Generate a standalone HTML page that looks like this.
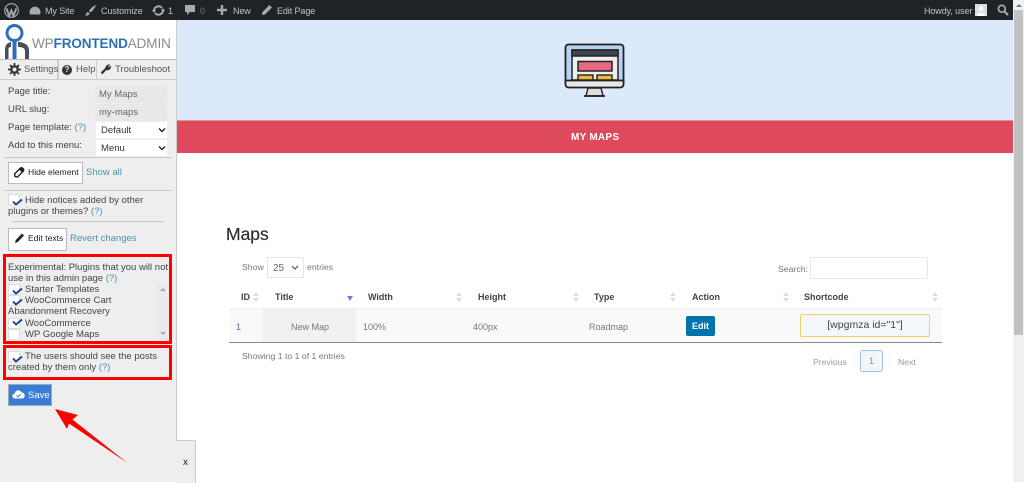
<!DOCTYPE html>
<html><head><meta charset="utf-8"><style>
html,body{margin:0;padding:0;width:1024px;height:482px;overflow:hidden;background:#fff;font-family:"Liberation Sans",sans-serif}
.a{position:absolute;white-space:nowrap}
.bar{color:#c3c4c7;font-size:9px;top:5px;line-height:12px;letter-spacing:-.1px}
.s{font-size:9.5px;color:#444;line-height:12px}
.b{font-size:8.6px;color:#222;line-height:12px}
.l{color:#4f8fb3}
.inp{background:#e8e8e8;color:#666;font-size:9.5px;border-radius:2px;left:95px;width:72px;height:17px;line-height:17px;text-indent:4px}
.sel{background:#fff;color:#333;font-size:9.5px;left:96px;width:71px;height:16px;line-height:18px;text-indent:5px}
.cb{width:10px;height:9px;background:#fff;border:1px solid #ddd}
.th{font-size:9px;font-weight:bold;color:#444;top:291px;line-height:12px}
.td{font-size:9px;color:#777;top:321px;line-height:12px}
.m{font-size:8.7px;color:#777;line-height:12px}
</style></head><body>
<div class="a" style="left:0;top:0;width:1024px;height:20px;background:#1d2327"></div>
<svg class="a" style="left:4px;top:3px" width="15" height="15" viewBox="0 0 15 15"><circle cx="7.5" cy="7.5" r="6.8" fill="none" stroke="#a7aaad" stroke-width="1.1"/><path d="M2.5 5.5L5.3 12.8 7.3 7.5 9.4 12.8 12.3 5.5" fill="none" stroke="#a7aaad" stroke-width="1.9"/></svg>
<svg class="a" style="left:29px;top:5px" width="12" height="10" viewBox="0 0 12 10"><path d="M1 9.5A5.5 5.5 0 1 1 11 9.5Z" fill="#a7aaad"/></svg>
<div class="a bar" style="left:45px">My Site</div>
<svg class="a" style="left:84px;top:4px" width="13" height="13" viewBox="0 0 13 13"><path d="M12 1C9 2 6 5 5 7L6.5 8.5C8.5 7 11 4 12 1ZM4 8C2.5 8 2.5 10 1 11.500C3 12 5.500 11 5.500 9.500Z" fill="#a7aaad"/></svg>
<div class="a bar" style="left:101px">Customize</div>
<svg class="a" style="left:152px;top:5px" width="13" height="11" viewBox="0 0 13 11"><path d="M2 5.500A4.500 4.500 0 0 1 10 3M11 5.500A4.500 4.500 0 0 1 3 8" fill="none" stroke="#a7aaad" stroke-width="2"/><path d="M0 5H4L2 8ZM9 6H13L11 3Z" fill="#a7aaad"/></svg>
<div class="a bar" style="left:168px">1</div>
<svg class="a" style="left:184px;top:4px" width="12" height="12" viewBox="0 0 12 12"><path d="M1 1H11V8H6L3 11V8H1Z" fill="#a7aaad"/></svg>
<div class="a bar" style="left:200px;color:#777">0</div>
<svg class="a" style="left:217px;top:5px" width="10" height="10" viewBox="0 0 10 10"><path d="M5 0V10M0 5H10" stroke="#a7aaad" stroke-width="2.400"/></svg>
<div class="a bar" style="left:233px">New</div>
<svg class="a" style="left:261px;top:4px" width="12" height="12" viewBox="0 0 12 12"><path d="M8.500 1L11 3.500 4 10.500 1 11 1.500 8Z" fill="#a7aaad"/></svg>
<div class="a bar" style="left:277px">Edit Page</div>
<div class="a bar" style="left:924px">Howdy, user</div>
<div class="a" style="left:975px;top:4px;width:12px;height:12px;background:#ddd"></div>
<svg class="a" style="left:975px;top:4px" width="12" height="12" viewBox="0 0 12 12"><circle cx="6" cy="4.500" r="2.300" fill="#fff"/><path d="M2 12C2 8 10 8 10 12Z" fill="#fff"/></svg>
<svg class="a" style="left:997px;top:4px" width="12" height="12" viewBox="0 0 12 12"><circle cx="4.800" cy="4.800" r="3.400" fill="none" stroke="#a7aaad" stroke-width="1.700"/><path d="M7.500 7.500L11 11" stroke="#a7aaad" stroke-width="2.200"/></svg>

<div class="a" style="left:1013px;top:0;width:11px;height:482px;background:#f1f1f1"></div>
<div class="a" style="left:1014px;top:10px;width:9px;height:325px;background:#c1c1c1"></div>
<div class="a" style="left:1016px;top:4px;width:0;height:0;border:3px solid transparent;border-bottom:3px solid #777;border-top:0"></div>

<div class="a" style="left:177px;top:20px;width:836px;height:100px;background:#dce9fb"></div>
<div class="a" style="left:177px;top:120px;width:836px;height:33px;background:#de4a5b"></div>
<div class="a" style="left:177px;top:120px;width:836px;height:1px;background:#e8909a"></div>
<div class="a" style="left:571px;top:131px;font-size:10px;font-weight:bold;color:#fff;letter-spacing:.25px;line-height:13px">MY MAPS</div>
<svg class="a" style="left:560px;top:40px" width="70" height="60" viewBox="0 0 70 60">
<rect x="5.500" y="4.500" width="58" height="42" rx="3" fill="#b8d4f5" stroke="#222" stroke-width="1.800"/>
<rect x="12" y="10" width="46" height="30" fill="#eee" stroke="#222" stroke-width="1.500"/>
<rect x="12" y="10" width="46" height="6" fill="#3d4650" stroke="#222" stroke-width="1.500"/>
<rect x="18" y="21.500" width="34" height="9.500" fill="#e86a82" stroke="#222" stroke-width="1.500"/>
<rect x="18" y="35" width="15" height="5" fill="#e8b93c" stroke="#222" stroke-width="1.400"/>
<rect x="37" y="35" width="15" height="5" fill="#e8b93c" stroke="#222" stroke-width="1.400"/>
<path d="M5.500 40.500H63.500V44A3 3 0 0 1 60.500 47.500H8.500A3 3 0 0 1 5.500 44Z" fill="#e6e6e6" stroke="#222" stroke-width="1.800"/>
<path d="M28 48H41L43 56H26Z" fill="#ddd" stroke="#222" stroke-width="1.400"/>
<path d="M24 56H45" stroke="#222" stroke-width="1.800"/>
</svg>

<div class="a" style="left:226px;top:223px;font-size:17.500px;color:#2b2f33;line-height:22px;-webkit-text-stroke:.2px #2b2f33">Maps</div>
<div class="a m" style="left:242px;top:261px">Show</div>
<div class="a" style="left:267px;top:257px;width:35px;height:19px;border:1px solid #e4e4e4;border-radius:2px;font-size:10px;color:#666;line-height:21px;text-indent:5px">25</div>
<svg class="a" style="left:291px;top:265px" width="8" height="5" viewBox="0 0 8 5"><path d="M1 1L4 4 7 1" fill="none" stroke="#555" stroke-width="1.200"/></svg>
<div class="a m" style="left:307px;top:261px">entries</div>
<div class="a m" style="left:778px;top:263px">Search:</div>
<div class="a" style="left:810px;top:257px;width:116px;height:20px;border:1px solid #e6e6e6;border-radius:2px"></div>

<div class="a th" style="left:241px">ID</div><div class="a th" style="left:275px">Title</div><div class="a th" style="left:368px">Width</div><div class="a th" style="left:478px">Height</div><div class="a th" style="left:594px">Type</div><div class="a th" style="left:692px">Action</div><div class="a th" style="left:804px">Shortcode</div>
<svg class="a" style="left:220px;top:290px" width="730" height="16" viewBox="0 0 730 16" fill="#ddd"><path d="M36 2L39 6H33ZM36 12L39 8H33ZM239 2L242 6H236ZM239 12L242 8H236ZM356 2L359 6H353ZM356 12L359 8H353ZM453 2L456 6H450ZM453 12L456 8H450ZM566 2L569 6H563ZM566 12L569 8H563ZM715 2L718 6H712ZM715 12L718 8H712Z"/><path d="M127 6H133L130 11Z" fill="#7a7ad8"/></svg>
<div class="a" style="left:229px;top:308px;width:713px;height:34px;background:#f9f9f9;border-top:1px solid #f0f0f0"></div>
<div class="a" style="left:263px;top:309px;width:93px;height:34px;background:#f1f1f1"></div>
<div class="a" style="left:229px;top:342px;width:713px;height:1px;background:#888"></div>
<div class="a td" style="left:236px;color:#5a6a9a">1</div><div class="a td" style="left:291px">New Map</div><div class="a td" style="left:363px">100%</div><div class="a td" style="left:473px">400px</div><div class="a td" style="left:589px">Roadmap</div>
<div class="a" style="left:686px;top:316px;width:29px;height:20px;background:#0073aa;border-radius:2px;color:#fff;font-size:9px;font-weight:bold;text-align:center;line-height:20px">Edit</div>
<div class="a" style="left:800px;top:314px;width:128px;height:21px;background:#f4f7fb;border:1px solid #f3cf6b;border-radius:2px;color:#444;font-size:10.500px;text-align:center;line-height:21px">[wpgmza id="1"]</div>
<div class="a m" style="left:242px;top:350px">Showing 1 to 1 of 1 entries</div>
<div class="a m" style="left:813px;top:356px;color:#999">Previous</div>
<div class="a" style="left:860px;top:350px;width:21px;height:20px;background:#f3f6f9;border:1px solid #9cc4dc;border-radius:3px;color:#6a9ab8;font-size:9px;text-align:center;line-height:21px">1</div>
<div class="a m" style="left:898px;top:356px;color:#999">Next</div>

<div class="a" style="left:0;top:20px;width:176px;height:462px;background:#eee;border-right:1px solid #ccc"></div>
<div class="a" style="left:176px;top:440px;width:19px;height:42px;background:#eee;border-top:1px solid #ccc;border-right:1px solid #ccc"></div>
<div class="a" style="left:183px;top:457px;font-size:10px;color:#222;line-height:12px">x</div>
<div class="a" style="left:0;top:20px;width:176px;height:39px;background:#fff"></div>
<svg class="a" style="left:4px;top:21px" width="27" height="38" viewBox="0 0 27 38"><circle cx="10.500" cy="12" r="7.500" fill="none" stroke="#2e6fb7" stroke-width="3"/><rect x="8.500" y="19" width="4" height="19" fill="#2e6fb7"/><path d="M1 38V29C1 24 3 22 7 21V26C5 26 4.500 27 4.500 29V38Z" fill="#4a5058"/><path d="M25 38V29C25 24 20 21 14 21V26C18 26 21 27 21 30V38Z" fill="#4a5058"/></svg>
<div class="a" style="left:32px;top:36px;font-size:13.500px;line-height:16px;color:#8a8a8a;letter-spacing:-.1px">WP<b style="color:#2e6fb7">FRONTEND</b>ADMIN</div>
<div class="a" style="left:0;top:59px;width:176px;height:1px;background:#bbb"></div>
<div class="a" style="left:0;top:79px;width:176px;height:1px;background:#ccc"></div>
<div class="a" style="left:57px;top:60px;width:2px;height:19px;background:#ccc"></div>
<div class="a" style="left:96px;top:60px;width:1px;height:19px;background:#ccc"></div>
<svg class="a" style="left:8px;top:63px" width="13" height="13" viewBox="0 0 13 13"><circle cx="6.500" cy="6.500" r="3.200" fill="none" stroke="#333" stroke-width="2.400"/><path d="M6.500 0V13M0 6.500H13M2 2L11 11M11 2L2 11" stroke="#333" stroke-width="1.800" stroke-dasharray="2.200 8.600"/></svg>
<div class="a s" style="left:24px;top:64px;color:#555">Settings</div>
<div class="a" style="left:62px;top:65px;width:10px;height:10px;border-radius:50%;background:#333;color:#eee;font-size:8px;font-weight:bold;text-align:center;line-height:10px">?</div>
<div class="a s" style="left:76px;top:64px;color:#555">Help</div>
<svg class="a" style="left:100px;top:64px" width="11" height="11" viewBox="0 0 11 11"><path d="M1 9L6 4M7 1.500L9 1 7.500 3 8.500 4 10.500 2.500C10.500 5 8 6.500 6 5.500L2 10Z" fill="#333" stroke="#333"/></svg>
<div class="a s" style="left:115px;top:64px;color:#555">Troubleshoot</div>

<div class="a s" style="left:8px;top:86px">Page title:</div>
<div class="a inp" style="top:86px">My Maps</div>
<div class="a s" style="left:8px;top:104px">URL slug:</div>
<div class="a inp" style="top:104px">my-maps</div>
<div class="a s" style="left:8px;top:122px">Page template: <span class="l">(?)</span></div>
<div class="a sel" style="top:122px">Default</div>
<div class="a s" style="left:8px;top:140px">Add to this menu:</div>
<div class="a sel" style="top:140px">Menu</div>
<svg class="a" style="left:158px;top:127px" width="8" height="26" viewBox="0 0 8 26"><path d="M1 1.500L4 4.500 7 1.500M1 19.500L4 22.500 7 19.500" fill="none" stroke="#222" stroke-width="1.400"/></svg>
<div class="a" style="left:4px;top:157px;width:168px;height:1px;background:#c8c8c8"></div>

<div class="a" style="left:8px;top:162px;width:73px;height:20px;background:#fff;border:1px solid #bbb"></div>
<svg class="a" style="left:13px;top:166px" width="12" height="12" viewBox="0 0 12 12"><path d="M1.500 8L7 2.500C8 1.500 9 1.500 10 2.500S11 4.500 10 5.500L4.500 11 2 10.500Z" fill="#fff" stroke="#222" stroke-width="1.400"/><path d="M6 3.500L9 6.500 10 5.500C11 4.500 11 3.500 10 2.500S8 1.500 7 2.500Z" fill="#222"/></svg>
<div class="a b" style="left:28px;top:166px">Hide element</div>
<div class="a s l" style="left:86px;top:167px;color:#4f8fb3">Show all</div>
<div class="a" style="left:4px;top:190px;width:168px;height:1px;background:#c8c8c8"></div>
<div class="a cb" style="left:8px;top:194px"></div>
<div class="a s" style="left:25px;top:195px">Hide notices added by other</div>
<div class="a s" style="left:8px;top:206px">plugins or themes? <span class="l">(?)</span></div>
<div class="a" style="left:12px;top:221px;width:152px;height:1px;background:#c8c8c8"></div>
<div class="a" style="left:8px;top:228px;width:57px;height:21px;background:#fff;border:1px solid #bbb"></div>
<svg class="a" style="left:14px;top:232px" width="11" height="12" viewBox="0 0 11 12"><path d="M1 11L1.800 8 8 1.500 10 3.500 3.800 10Z" fill="#222"/></svg>
<div class="a b" style="left:28px;top:232px">Edit texts</div>
<div class="a s l" style="left:70px;top:233px;color:#4f8fb3">Revert changes</div>

<div class="a" style="left:157px;top:284px;width:10px;height:56px;background:#e9e9e9"></div>
<div class="a" style="left:160px;top:288px;width:0;height:0;border:3px solid transparent;border-top:0;border-bottom:3px solid #aaa"></div>
<div class="a" style="left:160px;top:332px;width:0;height:0;border:3px solid transparent;border-bottom:0;border-top:3px solid #aaa"></div>
<div class="a" style="left:3px;top:254px;width:163px;height:84px;border:3px solid #f00"></div>
<div class="a" style="left:3px;top:345px;width:163px;height:29px;border:3px solid #f00"></div>
<div class="a s" style="left:8px;top:262px">Experimental: Plugins that you will not</div>
<div class="a s" style="left:8px;top:273px">use in this admin page <span class="l">(?)</span></div>
<div class="a cb" style="left:8px;top:284px"></div>
<div class="a s" style="left:25px;top:284px">Starter Templates</div>
<div class="a cb" style="left:8px;top:295px"></div>
<div class="a s" style="left:25px;top:295px">WooCommerce Cart</div>
<div class="a s" style="left:8px;top:306px">Abandonment Recovery</div>
<div class="a cb" style="left:8px;top:318px"></div>
<div class="a s" style="left:25px;top:318px">WooCommerce</div>
<div class="a cb" style="left:8px;top:329px"></div>
<div class="a s" style="left:25px;top:329px">WP Google Maps</div>
<div class="a cb" style="left:8px;top:351px"></div>
<div class="a s" style="left:25px;top:351px">The users should see the posts</div>
<div class="a s" style="left:8px;top:362px">created by them only <span class="l">(?)</span></div>
<svg class="a" style="left:0;top:190px" width="30" height="180" viewBox="0 0 30 180" fill="none" stroke="#1a3d9e" stroke-width="1.900"><path d="M13 11.500L16 14.500 22 9.500M13 100.500L16 103.500 22 98.500M13 111.500L16 114.500 22 109.500M13 131.500L16 134.500 22 129.500M13 168.500L16 171.500 22 166.500"/></svg>

<div class="a" style="left:8px;top:384px;width:42px;height:20px;background:#3a7bd5;border:1px solid #9ab;color:#fff;font-size:9.500px;line-height:21px;text-indent:19px">Save</div>
<svg class="a" style="left:12px;top:389px" width="13" height="10" viewBox="0 0 13 10"><path d="M3 9.500A2.500 2.500 0 0 1 2.800 4.500 3.500 3.500 0 0 1 9.500 3.500 3 3 0 0 1 10 9.500Z" fill="#fff"/><path d="M4.500 6.500L6 8 8.500 5" fill="none" stroke="#3a7bd5" stroke-width="1"/></svg>

<svg class="a" style="left:50px;top:400px" width="85" height="70" viewBox="0 0 85 70"><path d="M5 9L28 15 22.500 19.500 77.500 63 19 23.500 17 29Z" fill="#f00"/></svg>
</body></html>
